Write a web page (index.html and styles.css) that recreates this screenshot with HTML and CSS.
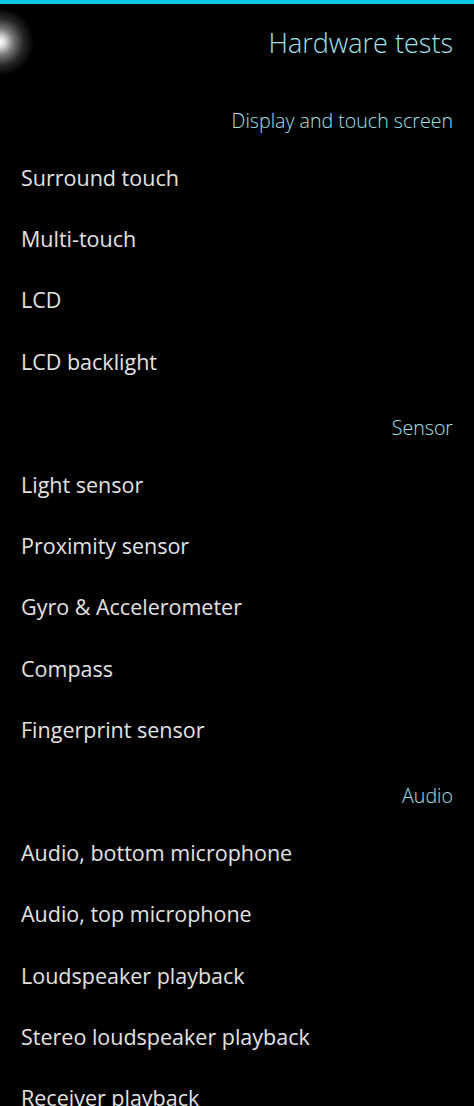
FILE: index.html
```html
<!DOCTYPE html>
<html lang="en">
<head>
<meta charset="utf-8">
<title>Hardware tests</title>
<link rel="stylesheet" href="styles.css">
</head>
<body>
<div class="topbar"></div>
<div class="glow"></div>
<main class="page">
  <header class="title">Hardware tests</header>
  <section class="group">
    <h2 class="section first">Display and touch screen</h2>
    <div class="item">Surround touch</div>
    <div class="item">Multi-touch</div>
    <div class="item">LCD</div>
    <div class="item">LCD backlight</div>
  </section>
  <section class="group">
    <h2 class="section">Sensor</h2>
    <div class="item">Light sensor</div>
    <div class="item">Proximity sensor</div>
    <div class="item">Gyro &amp; Accelerometer</div>
    <div class="item">Compass</div>
    <div class="item">Fingerprint sensor</div>
  </section>
  <section class="group">
    <h2 class="section">Audio</h2>
    <div class="item">Audio, bottom microphone</div>
    <div class="item">Audio, top microphone</div>
    <div class="item">Loudspeaker playback</div>
    <div class="item">Stereo loudspeaker playback</div>
    <div class="item">Receiver playback</div>
  </section>
</main>
</body>
</html>
```
FILE: styles.css
```css
html, body {
  margin: 0;
  padding: 0;
  background: #000;
  height: 1106px;
  overflow: hidden;
}
body {
  position: relative;
  font-family: "Open Sans", "Noto Sans", sans-serif;
  font-weight: 300;
  color: #ececec;
}
.topbar {
  height: 4px;
  background: #0cc9e3;
}
.glow {
  position: absolute;
  left: -34px;
  top: 8px;
  width: 68px;
  height: 68px;
  border-radius: 50%;
  background: radial-gradient(circle closest-side, rgba(255,255,255,1) 0%, rgba(255,255,255,0.85) 15%, rgba(255,255,255,0.45) 40%, rgba(255,255,255,0.15) 70%, rgba(255,255,255,0) 100%);
}
.page {
  display: flex;
  flex-direction: column;
}
.title {
  height: 76px;
  display: flex;
  align-items: center;
  justify-content: flex-end;
  padding-right: 21px;
  font-size: 27px;
  color: #9fe2ea;
}
.group {
  display: flex;
  flex-direction: column;
}
.section {
  margin: 9px 0 0 0;
  height: 52.7px;
  display: flex;
  align-items: center;
  justify-content: flex-end;
  padding-right: 21px;
  font-size: 19.6px;
  font-weight: 300;
  color: #9fe2ea;
}
.section.first {
  margin-top: 13.7px;
}
.item {
  height: 61.33px;
  display: flex;
  align-items: center;
  padding-left: 21px;
  font-size: 21.5px;
  font-weight: 400;
  color: #e2e2e2;
}
```
